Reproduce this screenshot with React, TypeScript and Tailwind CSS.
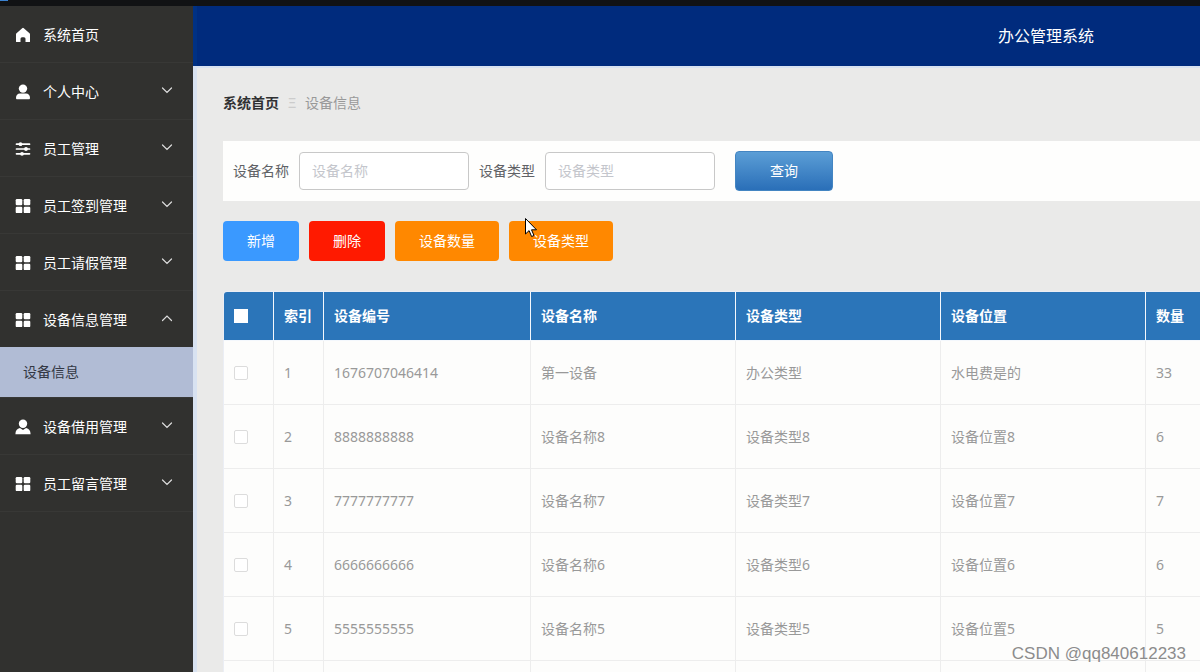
import React, { useState } from 'react';

type IconName = 'home' | 'user' | 'sliders' | 'grid' | 'person';

interface MenuItem {
    title: string;
    icon: IconName;
    expandable?: boolean;
    children?: string[];
}

interface Device {
    code: string;
    name: string;
    type: string;
    position: string;
    count: number;
}

const menus: MenuItem[] = [
    { title: '系统首页', icon: 'home' },
    { title: '个人中心', icon: 'user', expandable: true },
    { title: '员工管理', icon: 'sliders', expandable: true },
    { title: '员工签到管理', icon: 'grid', expandable: true },
    { title: '员工请假管理', icon: 'grid', expandable: true },
    { title: '设备信息管理', icon: 'grid', expandable: true, children: ['设备信息'] },
    { title: '设备借用管理', icon: 'person', expandable: true },
    { title: '员工留言管理', icon: 'grid', expandable: true },
];

const devices: Device[] = [
    { code: '1676707046414', name: '第一设备', type: '办公类型', position: '水电费是的', count: 33 },
    { code: '8888888888', name: '设备名称8', type: '设备类型8', position: '设备位置8', count: 6 },
    { code: '7777777777', name: '设备名称7', type: '设备类型7', position: '设备位置7', count: 7 },
    { code: '6666666666', name: '设备名称6', type: '设备类型6', position: '设备位置6', count: 6 },
    { code: '5555555555', name: '设备名称5', type: '设备类型5', position: '设备位置5', count: 5 },
];

const columns = ['设备编号', '设备名称', '设备类型', '设备位置', '数量'];

const MenuIcon: React.FC<{ name: IconName }> = ({ name }) => (
    <svg className="w-4 h-4 shrink-0" viewBox="0 0 16 16" fill="currentColor" aria-hidden="true">
        {name === 'home' && (
            <path d="M7.200 1.200a1.200 1.200 0 0 1 1.600 0l5.700 5c.4.3.5.7.5 1.200V14.500a.6.6 0 0 1-.6.6h-3.900v-3.400a1.500 1.500 0 0 0-1.500-1.500H7a1.500 1.500 0 0 0-1.500 1.500v3.400H1.600a.6.6 0 0 1-.6-.6V7.400c0-.5.1-.9.5-1.200z" />
        )}
        {name === 'user' && (
            <>
                <circle cx="8" cy="4.600" r="4.200" />
                <path d="M1 13.700c0-2.400 1.600-4.100 4-4.100h6c2.400 0 4 1.700 4 4.100 0 1-.4 1.500-1.400 1.500H2.400c-1 0-1.400-.5-1.400-1.500z" />
            </>
        )}
        {name === 'sliders' && (
            <>
                <path d="M1.500 3.200h13M1.500 8h13M1.500 12.800h13" stroke="currentColor" strokeWidth="1.700" strokeLinecap="round" />
                <circle cx="5.500" cy="3.200" r="1.900" />
                <circle cx="11" cy="8" r="1.900" />
                <circle cx="7" cy="12.800" r="1.900" />
            </>
        )}
        {name === 'grid' && (
            <>
                <rect x="0.700" y="1" width="6.600" height="6.300" rx="1.200" />
                <rect x="8.700" y="1" width="6.600" height="6.300" rx="1.200" />
                <rect x="0.700" y="8.800" width="6.600" height="6.300" rx="1.200" />
                <rect x="8.700" y="8.800" width="6.600" height="6.300" rx="1.200" />
            </>
        )}
        {name === 'person' && (
            <>
                <circle cx="8" cy="4.700" r="4.200" />
                <path d="M.4 15.200c0-3.300 1.700-5.400 4.500-6.100L8 11l3.100-1.900c2.800.7 4.500 2.800 4.500 6.100z" />
            </>
        )}
    </svg>
);

const Arrow: React.FC<{ up?: boolean }> = ({ up }) => (
    <svg className="w-3 h-3 mb-1 text-[#dddddd]" viewBox="0 0 12 12" fill="none" stroke="currentColor" aria-hidden="true">
        <path d={up ? 'M1.500 8.500L6 4l4.500 4.500' : 'M1.500 4L6 8.500 10.500 4'} strokeWidth={1.200} strokeLinecap="round" />
    </svg>
);

const Sidebar: React.FC = () => (
    <nav className="w-[193px] shrink-0 bg-[#31312f] text-white">
        <ul>
            {menus.map((menu) => (
                <li key={menu.title} className="border-b border-[#383836]">
                    <button className="w-full h-14 flex items-center pt-0.5 pl-[15px] pr-5 text-left">
                        <MenuIcon name={menu.icon} />
                        <span className="ml-3 flex-1">{menu.title}</span>
                        {menu.expandable && <Arrow up={!!menu.children} />}
                    </button>
                    {menu.children?.map((child) => (
                        <a key={child} href="#" className="flex items-center h-[50px] pl-[23px] bg-[#b1bcd5] text-[#333844]">
                            {child}
                        </a>
                    ))}
                </li>
            ))}
        </ul>
    </nav>
);

const SearchField: React.FC<{ id: string; label: string }> = ({ id, label }) => (
    <div className="flex items-center">
        <label htmlFor={id} className="text-[#606266]">{label}</label>
        <input
            id={id}
            type="text"
            placeholder={label}
            className="ml-2.5 w-[170px] h-[38px] px-3 pb-0.5 rounded border border-[#c8c8c8] bg-white outline-none placeholder:text-[#c4c6cc]"
        />
    </div>
);

const Checkbox: React.FC<{ label: string; checked: boolean; onChange: () => void; className: string }> = ({
    label,
    checked,
    onChange,
    className,
}) => (
    <input
        type="checkbox"
        aria-label={label}
        checked={checked}
        onChange={onChange}
        className={`appearance-none block w-3.5 h-3.5 border bg-white checked:bg-[#409eff] ${className}`}
    />
);

const DeviceTable: React.FC = () => {
    const [selected, setSelected] = useState<string[]>([]);
    const allSelected = selected.length === devices.length;

    const toggle = (code: string) => {
        setSelected(selected.includes(code) ? selected.filter((c) => c !== code) : [...selected, code]);
    };

    return (
        <div className="mt-[30px] rounded-tl border-l border-t border-[#ebeef5] overflow-hidden">
            <table className="table-fixed w-[1127px] border-separate border-spacing-0 text-left bg-[#fdfdfc]">
                <colgroup>
                    <col className="w-[50px]" />
                    <col className="w-[50px]" />
                    <col className="w-[207px]" />
                    <col className="w-[205px]" />
                    <col className="w-[205px]" />
                    <col className="w-[205px]" />
                    <col />
                </colgroup>
                <thead className="text-white [&_th]:bg-[#2b75b9] [&_th]:bg-clip-padding [&_th]:border-r [&_th]:border-b [&_th]:border-[#f4f8fd]">
                    <tr className="h-[49px]">
                        <th className="px-2.5">
                            <Checkbox
                                label="全选"
                                checked={allSelected}
                                onChange={() => setSelected(allSelected ? [] : devices.map((d) => d.code))}
                                className="border-white"
                            />
                        </th>
                        <th className="pl-2.5 font-bold whitespace-nowrap">索引</th>
                        {columns.map((column) => (
                            <th key={column} className="px-2.5 font-bold">{column}</th>
                        ))}
                    </tr>
                </thead>
                <tbody className="text-[#999999] [&_td]:px-2.5 [&_td]:border-r [&_td]:border-b [&_td]:border-[#ededed]">
                    {devices.map((device, index) => (
                        <tr key={device.code} className="h-16">
                            <td>
                                <Checkbox
                                    label={device.name}
                                    checked={selected.includes(device.code)}
                                    onChange={() => toggle(device.code)}
                                    className="rounded-xs border-[#dcdcdc]"
                                />
                            </td>
                            <td>{index + 1}</td>
                            <td>{device.code}</td>
                            <td>{device.name}</td>
                            <td>{device.type}</td>
                            <td>{device.position}</td>
                            <td>{device.count}</td>
                        </tr>
                    ))}
                    <tr className="h-16" aria-hidden="true">
                        <td /><td /><td /><td /><td /><td /><td />
                    </tr>
                </tbody>
            </table>
        </div>
    );
};

export default function App() {
    return (
        <div className="relative h-screen flex flex-col overflow-hidden bg-[#eaeae9] text-sm font-['Noto_Sans','Noto_Sans_CJK_SC',sans-serif]">
            <div className="h-1.5 shrink-0 bg-[#111214]">
                <div className="w-2 h-px bg-[#3b82d0]" />
            </div>
            <div className="flex flex-1 min-h-0">
                <Sidebar />
                <div className="flex-1 min-w-0 flex flex-col">
                    <header className="h-[60px] shrink-0 flex items-center justify-end pr-[106px] border-l-4 border-[#003184] bg-[#002b7d] text-white">
                        <h1 className="text-base">办公管理系统</h1>
                    </header>
                    <main className="flex-1 min-h-0 overflow-hidden pl-[26px] border-l-4 border-t-2 border-[#d8e2f1]">
                        <div className="h-[70px] mb-[3px] flex items-center">
                            <a href="#" className="font-bold text-[#303133]">系统首页</a>
                            <span className="w-[26px] text-center text-[#cccccc]">Ξ</span>
                            <span className="text-[#999999]">设备信息</span>
                        </div>
                        <form className="h-[60px] flex items-center gap-2.5 px-2.5 bg-[#fefefd]" onSubmit={(e) => e.preventDefault()}>
                            <SearchField id="device-name" label="设备名称" />
                            <SearchField id="device-type" label="设备类型" />
                            <button className="ml-2.5 w-[98px] h-10 rounded border border-[#4385c2] bg-linear-to-b from-[#5b9ed6] to-[#2a6fb8] text-white">
                                查询
                            </button>
                        </form>
                        <div className="mt-5 flex gap-2.5 text-white">
                            <button className="w-[76px] h-10 rounded bg-[#3a99ff]">新增</button>
                            <button className="w-[76px] h-10 rounded bg-[#ff1a00]">删除</button>
                            <button className="w-[104px] h-10 rounded bg-[#ff8800]">设备数量</button>
                            <button className="w-[104px] h-10 rounded bg-[#ff8800]">设备类型</button>
                        </div>
                        <DeviceTable />
                    </main>
                </div>
            </div>
            <svg className="absolute left-[525px] top-[218px] w-3 h-5" viewBox="0 0 12 20" aria-hidden="true">
                <path d="M.5.500v15.500l3.600-3.400 2.500 5.900 2.400-1-2.500-5.700h5z" fill="white" stroke="black" />
            </svg>
            <div className="absolute right-3.5 bottom-1.5 text-[17px] leading-6 text-[#8c8c8c] font-['Liberation_Sans',sans-serif]">
                CSDN @qq840612233
            </div>
        </div>
    );
}
